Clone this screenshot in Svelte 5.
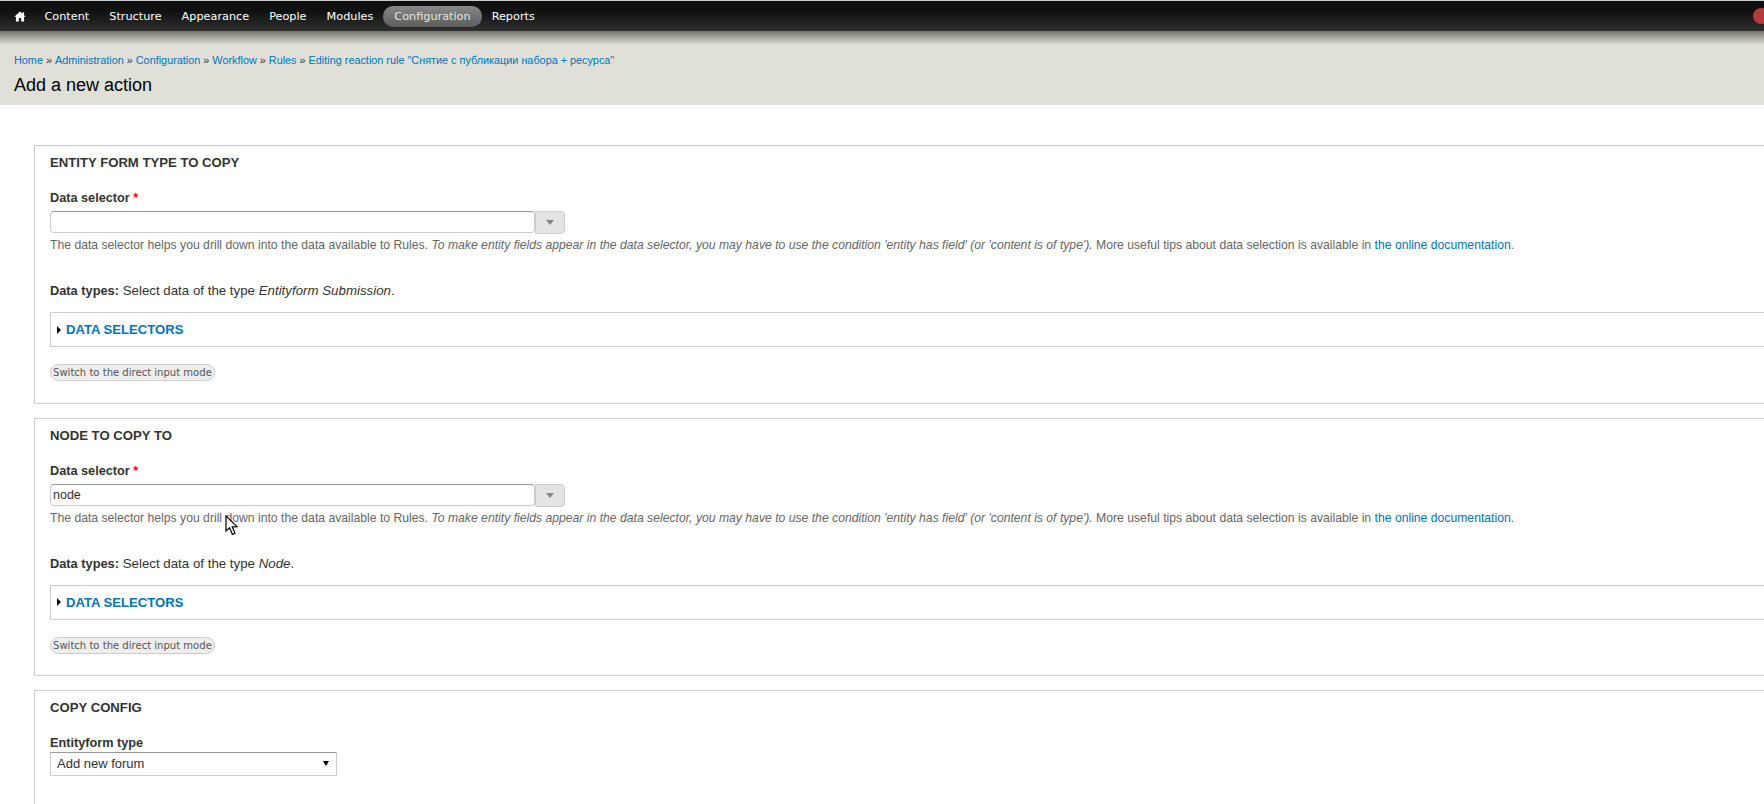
<script>
	const navItems = ['Content', 'Structure', 'Appearance', 'People', 'Modules', 'Configuration', 'Reports'];
	const crumbs = ['Home', 'Administration', 'Configuration', 'Workflow', 'Rules', 'Editing reaction rule "Снятие с публикации набора + ресурса"'];
	const selectors = [
		{ legend: 'Entity form type to copy', value: '', dataType: 'Entityform Submission' },
		{ legend: 'Node to copy to', value: 'node', dataType: 'Node' }
	];
</script>

<div class="toolbar">
	<a class="home" href="#home" aria-label="Home">
		<svg width="12" height="11" viewBox="0 0 14 13"><path d="M7 0.5 L10 3.3 L10 1.5 L11.8 1.5 L11.8 5 L13.8 6.9 L11.8 6.9 L11.8 12.5 L8.4 12.5 L8.4 8.4 L5.6 8.4 L5.6 12.5 L2.2 12.5 L2.2 6.9 L0.2 6.9 Z" fill="#fff"/></svg>
	</a>
	{#each navItems as item}
		<a class="nav-item" class:active={item === 'Configuration'} href="#nav">{item}</a>
	{/each}
	<span class="user-dot"></span>
</div>

<header class="page-head">
	<div class="breadcrumb">
		{#each crumbs as crumb, i}
			{#if i > 0}<span class="sep">&nbsp;»&nbsp;</span>{/if}<a href="#crumb">{crumb}</a>
		{/each}
	</div>
	<h1>Add a new action</h1>
</header>

<main class="content">
	{#each selectors as s}
		<fieldset class="box">
			<div class="legend">{s.legend}</div>
			<label class="field-label" for="sel-{s.legend}">Data selector <span class="req">*</span></label>
			<div class="combo">
				<input id="sel-{s.legend}" type="text" value={s.value} />
				<span class="combo-btn"><i></i></span>
			</div>
			<p class="help">The data selector helps you drill down into the data available to Rules. <em>To make entity fields appear in the data selector, you may have to use the condition 'entity has field' (or 'content is of type').</em> More useful tips about data selection is available in <a href="#docs">the online documentation</a>.</p>
			<p class="types"><strong>Data types:</strong> Select data of the type <em>{s.dataType}</em>.</p>
			<div class="collapsed">
				<i class="tri"></i><a href="#sel">Data selectors</a>
			</div>
			<button class="switch" type="button">Switch to the direct input mode</button>
		</fieldset>
	{/each}

	<fieldset class="box last">
		<div class="legend">Copy config</div>
		<label class="field-label" for="ef-type">Entityform type</label>
		<div class="select" id="ef-type">Add new forum<i></i></div>
	</fieldset>
</main>

<svg class="cursor" width="14" height="21" viewBox="0 0 14 21"><path d="M1 1 L1 16 L4.6 12.8 L7.4 19.4 L10 18.2 L7.2 11.8 L12 11.6 Z" fill="#fff" stroke="#000" stroke-width="1.2"/></svg>

<style>
	:global(body) {
		margin: 0;
		background: #fff;
		height: 804px;
		overflow: hidden;
		position: relative;
		font-family: "Liberation Sans", Arial, sans-serif;
		font-size: 13px;
		color: #333;
	}

	a {
		color: #0074bd;
		text-decoration: none;
	}

	.toolbar {
		position: relative;
		display: flex;
		align-items: center;
		height: 30px;
		padding-left: 14px;
		border-top: 1px solid #ccc;
		background: linear-gradient(#0e0e0e 0, #111 35%, #2f2f2f 100%);
		font-family: "DejaVu Sans", Verdana, sans-serif;
		font-size: 11.25px;
	}

	.home {
		display: flex;
		width: 20.5px;
	}

	.nav-item {
		color: #fff;
		padding: 3px 10px;
		line-height: 15px;
		border-radius: 10px;
	}

	.nav-item.active {
		padding: 3px 11px;
		background: linear-gradient(#888, #5c5c5c);
		color: #e6e6e6;
	}

	.user-dot {
		position: absolute;
		right: -5px;
		top: 7px;
		width: 16px;
		height: 16px;
		border-radius: 50%;
		background: #b33a3a;
	}

	.page-head {
		height: 74px;
		padding: 21px 14px 0;
		box-sizing: border-box;
		background: linear-gradient(#72726c 0, #e0e0d8 14px);
	}

	.breadcrumb {
		font-size: 10.85px;
		line-height: 16px;
		color: #333;
	}

	h1 {
		margin: 5px 0 0;
		font-size: 18px;
		font-weight: normal;
		line-height: 24px;
		color: #000;
	}

	.content {
		padding: 40px 0 0 34px;
		width: 1800px;
	}

	.box {
		margin: 0 0 14px;
		padding: 0 15px;
		height: 258.5px;
		border: 1px solid #ccc;
		box-sizing: border-box;
	}

	.box.last {
		height: 200px;
	}

	.legend {
		margin-top: 9px;
		font-weight: bold;
		font-size: 13.15px;
		line-height: 16px;
		text-transform: uppercase;
		color: #333;
	}

	.field-label {
		display: block;
		margin-top: 19px;
		font-size: 12.7px;
		font-weight: bold;
		line-height: 16px;
	}

	.req {
		color: #f00;
	}

	.combo {
		display: flex;
		margin-top: 5px;
	}

	.combo input {
		width: 485px;
		height: 22px;
		margin: 0;
		padding: 0 2px;
		box-sizing: border-box;
		border: 1px solid #ccc;
		border-top-color: #999;
		border-radius: 4px;
		font: 12.5px "Liberation Sans", Arial, sans-serif;
		color: #333;
		outline: none;
	}

	.combo-btn {
		display: flex;
		align-items: center;
		justify-content: center;
		width: 30px;
		height: 23px;
		box-sizing: border-box;
		border: 1px solid #ccc;
		border-radius: 0 4px 4px 0;
		background: #e4e4e4;
	}

	.combo-btn i {
		border: 4px solid transparent;
		border-top: 5px solid #888;
		border-bottom: 0;
	}

	.help {
		margin: 4px 0 0;
		font-size: 12.2px;
		line-height: 15px;
		color: #666;
	}

	.types {
		margin: 30px 0 0;
		font-size: 13.3px;
		line-height: 16px;
		color: #333;
	}

	.types strong {
		font-size: 12.8px;
	}

	.collapsed {
		display: flex;
		align-items: center;
		height: 35px;
		margin-top: 13px;
		padding-left: 6px;
		box-sizing: border-box;
		border: 1px solid #ccc;
		font-size: 13.1px;
		font-weight: bold;
		text-transform: uppercase;
	}

	.tri {
		border: 4px solid transparent;
		border-left: 4px solid #000;
		border-right: 0;
		margin-right: 5px;
	}

	.switch {
		display: block;
		margin: 17px 0 0;
		padding: 0 2px;
		height: 17px;
		border: 1px solid #ccc;
		border-radius: 9px;
		background: #eee;
		font: 10.05px "DejaVu Sans", Verdana, sans-serif;
		color: #555;
	}

	.select {
		position: relative;
		width: 287px;
		height: 24px;
		margin-top: 1px;
		padding-left: 6px;
		box-sizing: border-box;
		border: 1px solid #ccc;
		border-top-color: #999;
		line-height: 22px;
		color: #333;
	}

	.select i {
		position: absolute;
		right: 7px;
		top: 8px;
		border: 3.5px solid transparent;
		border-top: 5px solid #000;
		border-bottom: 0;
	}

	.cursor {
		position: absolute;
		left: 225px;
		top: 515px;
	}
</style>
